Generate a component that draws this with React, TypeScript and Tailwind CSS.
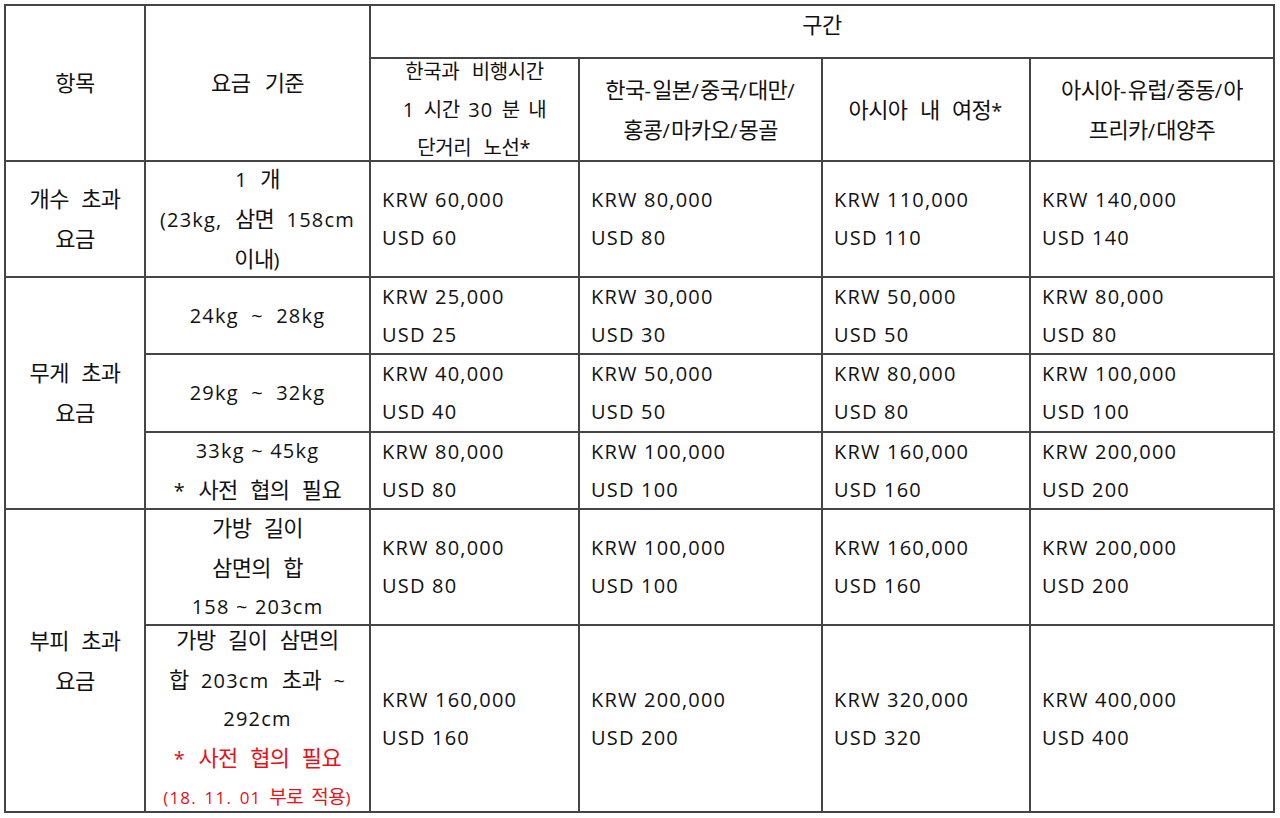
import React from "react";

const base =
  "bg-white flex flex-col justify-center text-[20px] leading-[38px] tracking-[1.2px] text-[#111]";
const ctr = base + " items-center text-center [word-spacing:6px]";
const price = base + " pl-[11px]";

const HANGUL = /([\uAC00-\uD7A3]+)/;

function T({ s, small }: { s: string; small?: boolean }) {
  const parts = s.split(HANGUL);
  return (
    <span className="block">
      {parts.map((p, i) =>
        i % 2 === 1 ? (
          <span
            key={i}
            className={
              small
                ? "text-[20px] tracking-[-0.4px]"
                : "text-[22px] tracking-[-0.6px]"
            }
          >
            {p}
          </span>
        ) : (
          <React.Fragment key={i}>{p}</React.Fragment>
        )
      )}
    </span>
  );
}

function Price({ krw, usd }: { krw: string; usd: string }) {
  return (
    <div className={price}>
      <div>KRW {krw}</div>
      <div>USD {usd}</div>
    </div>
  );
}

export default function App() {
  return (
    <div className="min-h-[818px] bg-white pt-[4px] pl-[4px] font-['Open_Sans','Noto_Sans_CJK_KR',sans-serif]">
      <div className="grid w-fit grid-cols-[138px_223px_207px_241px_206px_242px] grid-rows-[51px_101px_114px_75px_76px_75px_114px_185px] gap-[2px] bg-[#454545] p-[2px]">
        {/* header */}
        <div className={ctr + " row-span-2"}>
          <T s="항목" />
        </div>
        <div className={ctr + " row-span-2 [word-spacing:8px]"}>
          <T s="요금 기준" />
        </div>
        <div className={ctr + " col-span-4 pb-[13px]"}>
          <T s="구간" />
        </div>

        <div className={ctr + " leading-[34.5px] text-[18px] tracking-[0.6px] [word-spacing:4px]"}>
          <T small s="한국과 비행시간" />
          <span className="block [word-spacing:2px]">
            <T small s="1 시간 30 분 내" />
          </span>
          <T small s="단거리 노선*" />
        </div>
        <div className={ctr + " tracking-[0.6px]"}>
          <T s="한국-일본/중국/대만/" />
          <T s="홍콩/마카오/몽골" />
        </div>
        <div className={ctr + " [word-spacing:6px]"}>
          <T s="아시아 내 여정*" />
        </div>
        <div className={ctr + " tracking-[0.6px]"}>
          <T s="아시아-유럽/중동/아" />
          <T s="프리카/대양주" />
        </div>

        {/* 개수 초과 */}
        <div className={ctr}>
          <T s="개수 초과" />
          <T s="요금" />
        </div>
        <div className={ctr + " leading-[37px] [word-spacing:3px]"}>
          <T s="1 개" />
          <T s="(23kg, 삼면 158cm" />
          <T s="이내)" />
        </div>
        <Price krw="60,000" usd="60" />
        <Price krw="80,000" usd="80" />
        <Price krw="110,000" usd="110" />
        <Price krw="140,000" usd="140" />

        {/* 무게 초과 */}
        <div className={ctr + " row-span-3"}>
          <T s="무게 초과" />
          <T s="요금" />
        </div>
        <div className={ctr + " [word-spacing:0px]"}>
          <span>24kg ~ 28kg</span>
        </div>
        <Price krw="25,000" usd="25" />
        <Price krw="30,000" usd="30" />
        <Price krw="50,000" usd="50" />
        <Price krw="80,000" usd="80" />

        <div className={ctr + " [word-spacing:0px]"}>
          <span>29kg ~ 32kg</span>
        </div>
        <Price krw="40,000" usd="40" />
        <Price krw="50,000" usd="50" />
        <Price krw="80,000" usd="80" />
        <Price krw="100,000" usd="100" />

        <div className={ctr}>
          <span className="block [word-spacing:0px]">33kg ~ 45kg</span>
          <T s="* 사전 협의 필요" />
        </div>
        <Price krw="80,000" usd="80" />
        <Price krw="100,000" usd="100" />
        <Price krw="160,000" usd="160" />
        <Price krw="200,000" usd="200" />

        {/* 부피 초과 */}
        <div className={ctr + " row-span-2"}>
          <T s="부피 초과" />
          <T s="요금" />
        </div>
        <div className={ctr}>
          <T s="가방 길이" />
          <T s="삼면의 합" />
          <span className="block [word-spacing:0px]">158 ~ 203cm</span>
        </div>
        <Price krw="80,000" usd="80" />
        <Price krw="100,000" usd="100" />
        <Price krw="160,000" usd="160" />
        <Price krw="200,000" usd="200" />

        <div className={ctr + " leading-[38.5px] [word-spacing:4px]"}>
          <T s="가방 길이 삼면의" />
          <T s="합 203cm 초과 ~" />
          <span className="block">292cm</span>
          <span className="block text-[#e5121a] [word-spacing:6px]">
            <T s="* 사전 협의 필요" />
          </span>
          <span className="block text-[17px] tracking-[1.2px] text-[#e5121a] [word-spacing:2px]">
            (18. 11. 01{" "}
            <span className="text-[19px] tracking-[-0.3px]">부로</span>{" "}
            <span className="text-[19px] tracking-[-0.3px]">적용</span>)
          </span>
        </div>
        <Price krw="160,000" usd="160" />
        <Price krw="200,000" usd="200" />
        <Price krw="320,000" usd="320" />
        <Price krw="400,000" usd="400" />
      </div>
    </div>
  );
}
